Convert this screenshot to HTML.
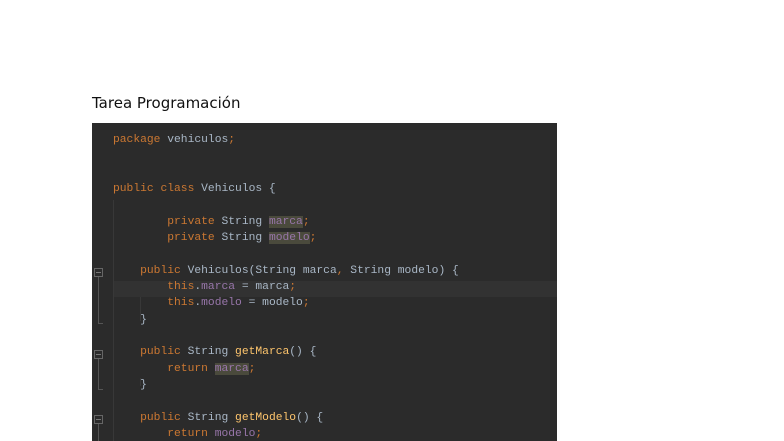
<!DOCTYPE html>
<html><head><meta charset="utf-8"><style>
body{margin:0;width:784px;height:441px;background:#fff;position:relative;overflow:hidden}
.t{position:absolute;left:92px;top:94px;font:15px "DejaVu Sans",sans-serif;color:#111}
.code{position:absolute;left:92px;top:123px;width:465px;height:318px;background:#2b2b2b;overflow:hidden}
.l{position:absolute;left:21px;margin-top:4px;height:16.33px;line-height:16.33px;font:11.3px "Liberation Mono",monospace;color:#a9b7c6;white-space:pre}
.k{color:#cc7832}.f{color:#9876aa}.m{color:#ffc66d}
.hl{background:#4a4a3c}
.cur{position:absolute;left:21px;top:157.5px;width:444px;height:16.33px;background:#323232}
.fold{position:absolute;left:2px;width:7px;height:7px;border:1px solid #666}
.fold:after{content:"";position:absolute;left:1px;top:3px;width:5px;height:1px;background:#777}
.vl{position:absolute;left:6px;width:1px;background:#555}
.hz{position:absolute;left:6px;width:5px;height:1px;background:#555}
.g{position:absolute;width:1px;background:#383838}
</style></head><body>
<div class="t">Tarea Programación</div>
<div class="code">
<div class="cur"></div>
<div class="g" style="left:21px;top:77px;height:245px"></div>
<div class="g" style="left:48px;top:174px;height:24px"></div>
<div class="g" style="left:48px;top:255px;height:8px"></div>
<div class="fold" style="top:145px"></div><div class="vl" style="top:154px;height:46px"></div><div class="hz" style="top:200px"></div>
<div class="fold" style="top:227px"></div><div class="vl" style="top:236px;height:30px"></div><div class="hz" style="top:266px"></div>
<div class="fold" style="top:292px"></div><div class="vl" style="top:301px;height:20px"></div>
<div class="l" style="top:7px"><span class="k">package</span> vehiculos<span class="k">;</span></div>
<div class="l" style="top:56px"><span class="k">public class</span> Vehiculos {</div>
<div class="l" style="top:88.7px">        <span class="k">private</span> String <span class="f hl">marca</span><span class="k">;</span></div>
<div class="l" style="top:105px">        <span class="k">private</span> String <span class="f hl">modelo</span><span class="k">;</span></div>
<div class="l" style="top:137.7px">    <span class="k">public</span> Vehiculos(String marca<span class="k">,</span> String modelo) {</div>
<div class="l" style="top:154px">        <span class="k">this</span>.<span class="f">marca</span> = marca<span class="k">;</span></div>
<div class="l" style="top:170.3px">        <span class="k">this</span>.<span class="f">modelo</span> = modelo<span class="k">;</span></div>
<div class="l" style="top:186.7px">    }</div>
<div class="l" style="top:219.3px">    <span class="k">public</span> String <span class="m">getMarca</span>() {</div>
<div class="l" style="top:235.7px">        <span class="k">return</span> <span class="f hl">marca</span><span class="k">;</span></div>
<div class="l" style="top:252px">    }</div>
<div class="l" style="top:284.7px">    <span class="k">public</span> String <span class="m">getModelo</span>() {</div>
<div class="l" style="top:301px">        <span class="k">return</span> <span class="f">modelo</span><span class="k">;</span></div>
</div>
</body></html>
